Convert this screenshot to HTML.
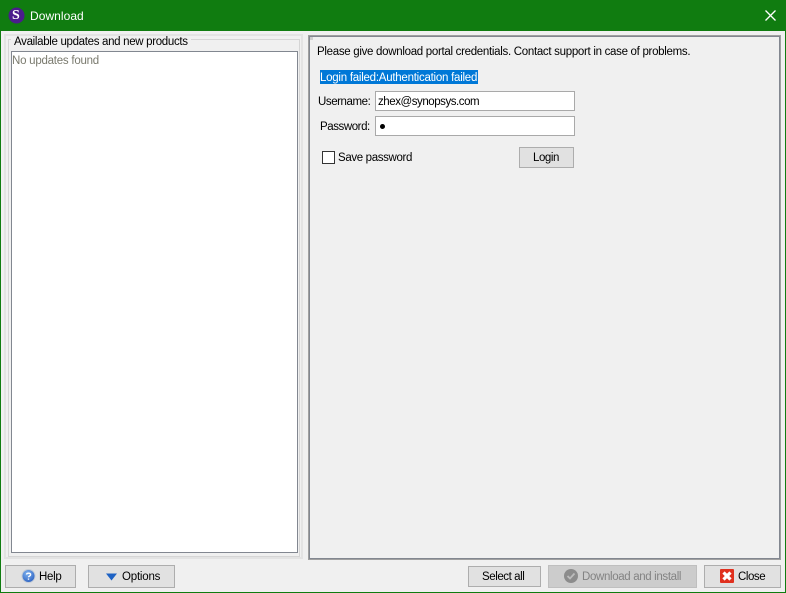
<!DOCTYPE html>
<html><head><meta charset="utf-8"><title>Download</title>
<style>
html,body{margin:0;padding:0}
body{width:786px;height:593px;overflow:hidden;position:relative;background:#f0f0f0;font-family:"Liberation Sans",sans-serif;font-size:11.5px;color:#000}
div{box-sizing:border-box}
.a{position:absolute}
.t{position:absolute;white-space:nowrap;line-height:16px;height:14px}
.btn{position:absolute;background:#e1e1e1;border:1px solid #adadad;height:23px}
svg{position:absolute;display:block}
</style></head><body>
<div class="a" style="left:0;top:0;width:786px;height:593px;border:1px solid #107c10;border-top:0"></div>
<div class="a" style="left:0;top:0;width:786px;height:31px;background:#107c10"></div>
<svg style="left:8px;top:7px" width="17" height="17" viewBox="0 0 17 17"><circle cx="8.500" cy="8.500" r="8" fill="#4b1c8c"/></svg>
<div class="t" style="left:12px;top:8px;color:#fff;font:bold 14px/16px 'Liberation Serif',serif">S</div>
<div class="t" style="left:30px;top:8px;color:#fff;font-size:12px;letter-spacing:.05px">Download</div>
<svg style="left:764px;top:9px" width="13" height="13" viewBox="0 0 13 13"><path d="M1.500 1.500L11.500 11.500M11.500 1.500L1.500 11.500" stroke="#fff" stroke-width="1.300" fill="none"/></svg>

<div class="a" style="left:4px;top:34px;width:299px;height:525px;border:2px solid #e3e3e3"></div>
<div class="a" style="left:8px;top:39px;width:292px;height:518px;border:1px solid #d5d5d5"></div>
<div class="t" style="left:11px;top:36px;background:#f0f0f0;padding:0 3px;letter-spacing:-.32px;line-height:13px">Available updates and new products</div>
<div class="a" style="left:11px;top:51px;width:287px;height:502px;background:#fff;border:1px solid #828790"></div>
<div class="t" style="left:12px;top:53px;color:#7a7a6e;letter-spacing:-.24px">No updates found</div>

<div class="a" style="left:308px;top:35px;width:473px;height:525px;border:1px solid #a0a0a0"></div>
<div class="a" style="left:309px;top:36px;width:471px;height:523px;border:1px solid #828790"></div>
<div class="a" style="left:310px;top:37px;width:3px;height:3px;background:#d0d0d0"></div>
<div class="t" style="left:317px;top:44px;letter-spacing:-.3px">Please give download portal credentials. Contact support in case of problems.</div>
<div class="t" style="left:320px;top:70px;background:#0078d7;color:#fff;letter-spacing:-.25px;width:158px">Login failed:Authentication failed</div>
<div class="t" style="left:318px;top:94px;letter-spacing:-.43px">Username:</div>
<div class="a" style="left:375px;top:91px;width:200px;height:20px;background:#fff;border:1px solid #a9a9a9"></div>
<div class="t" style="left:378px;top:94px;letter-spacing:-.45px">zhex@synopsys.com</div>
<div class="t" style="left:320px;top:119px;letter-spacing:-.43px">Password:</div>
<div class="a" style="left:375px;top:116px;width:200px;height:20px;background:#fff;border:1px solid #a9a9a9"></div>
<div class="a" style="left:380px;top:124px;width:5px;height:5px;border-radius:50%;background:#000"></div>
<div class="a" style="left:322px;top:151px;width:13px;height:13px;background:#fff;border:1px solid #333"></div>
<div class="t" style="left:338px;top:150px;letter-spacing:-.35px">Save password</div>
<div class="btn" style="left:519px;top:147px;width:55px;height:21px"></div>
<div class="t" style="left:533px;top:150px;letter-spacing:-.45px">Login</div>

<div class="btn" style="left:5px;top:565px;width:71px"></div>
<svg style="left:21px;top:569px" width="15" height="15" viewBox="0 0 15 15"><defs><radialGradient id="h" cx=".4" cy=".3" r=".8"><stop offset="0" stop-color="#7fb2ee"/><stop offset="1" stop-color="#2a5fc0"/></radialGradient></defs><circle cx="7.500" cy="7" r="7" fill="#c4ccd6"/><circle cx="7.500" cy="7" r="6" fill="url(#h)"/><path d="M5.500 5.500C5.700 3.800 9.600 3.700 9.600 5.700C9.600 7 7.600 7 7.500 8.300M7.500 9.500v1.300" stroke="#fff" stroke-width="1.400" fill="none"/></svg>
<div class="t" style="left:39px;top:569px;letter-spacing:-.3px">Help</div>
<div class="btn" style="left:88px;top:565px;width:87px"></div>
<svg style="left:105px;top:573px" width="13" height="8" viewBox="0 0 13 8"><path d="M1 0.500H12L6.500 7.500Z" fill="#1e62c4"/></svg>
<div class="t" style="left:122px;top:569px;letter-spacing:-.2px">Options</div>
<div class="btn" style="left:468px;top:566px;width:73px;height:21px"></div>
<div class="t" style="left:482px;top:569px;letter-spacing:-.43px">Select all</div>
<div class="a" style="left:548px;top:565px;width:149px;height:23px;background:#cccccc;border:1px solid #bfbfbf"></div>
<svg style="left:564px;top:569px" width="15" height="15" viewBox="0 0 15 15"><circle cx="7" cy="7" r="7" fill="#8c8c8c"/><path d="M3.500 7L6 9.500L10.500 4.500" stroke="#bdbdbd" stroke-width="1.800" fill="none"/></svg>
<div class="t" style="left:582px;top:569px;color:#838383;letter-spacing:-.35px">Download and install</div>
<div class="btn" style="left:704px;top:565px;width:77px"></div>
<svg style="left:720px;top:569px" width="15" height="15" viewBox="0 0 15 15"><rect x="0" y="0" width="14" height="14" rx="1" fill="#e0301e"/><path d="M3.500 3.500L10.500 10.500M10.500 3.500L3.500 10.500" stroke="#fff" stroke-width="3.200" fill="none"/></svg>
<div class="t" style="left:738px;top:569px;letter-spacing:-.45px">Close</div>
</body></html>
